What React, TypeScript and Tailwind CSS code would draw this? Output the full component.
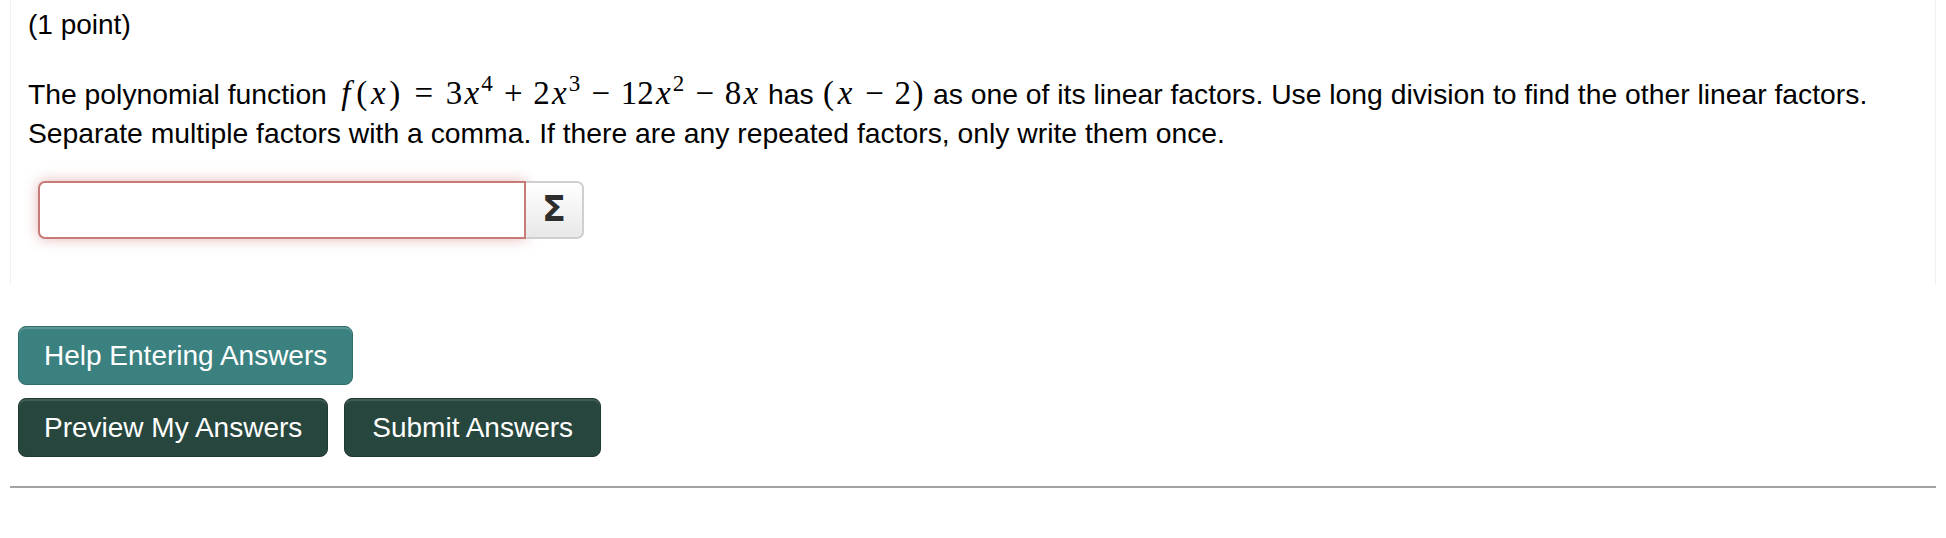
import React from 'react';

// MathJax-like rendering: fixed glyph boxes so widths follow TeX metrics
const Sup = ({ children }: { children: React.ReactNode }) => (
  <span className="relative -top-[13px] inline-block w-[12px] text-[23px] leading-none not-italic">{children}</span>
);

const X = () => <i className="inline-block w-[19px] text-center italic">x</i>;
const F = () => <i className="inline-block w-[20px] text-center italic pl-[2px]">f</i>;
const P = ({ c }: { c: string }) => <span className="inline-block w-[14px] text-center">{c}</span>;
const D = ({ c }: { c: string }) => <span className="inline-block w-[16.5px] text-center">{c}</span>;

const Op = ({ c, rel = false }: { c: string; rel?: boolean }) => (
  <span className={`inline-block w-[26px] text-center ${rel ? 'mx-[9px]' : 'mx-[7px]'}`}>{c}</span>
);

const Math = ({ children }: { children: React.ReactNode }) => (
  <span className="font-['Liberation_Serif',serif] text-[33px] leading-[39px] whitespace-nowrap">{children}</span>
);

export default function App() {
  return (
    <div className="w-[1946px] h-[538px] bg-white text-black font-['Liberation_Sans',Arial,sans-serif] overflow-hidden">
      {/* problem panel */}
      <div className="ml-[10px] w-[1926px] h-[285px] border-x border-[#f1f1f1] pl-[17px] pt-[5px]">
        <div className="text-[28px] leading-[40px]">(1 point)</div>
        <p className="mt-[29px] text-[28.3px] leading-[39px]">
          The polynomial function{' '}
          <Math>
            <F />
            <P c="(" />
            <X />
            <P c=")" />
            <Op c="=" rel />
            <D c="3" />
            <X />
            <Sup>4</Sup>
            <Op c="+" />
            <D c="2" />
            <X />
            <Sup>3</Sup>
            <Op c="−" />
            <D c="1" />
            <D c="2" />
            <X />
            <Sup>2</Sup>
            <Op c="−" />
            <D c="8" />
            <X />
          </Math>{' '}
          has{' '}
          <Math>
            <P c="(" />
            <X />
            <Op c="−" />
            <D c="2" />
            <P c=")" />
          </Math>{' '}
          as one of its linear factors. Use long division to find the other linear factors.
          <br />
          Separate multiple factors with a comma. If there are any repeated factors, only write them once.
        </p>
        <div className="mt-[28px] ml-[10px] flex">
          <div className="w-[488px] h-[58px] bg-white border-2 border-[#c67b79] rounded-l-[7px] shadow-[0_0_14px_rgba(185,74,72,0.4)]" />
          <div className="w-[58px] h-[58px] flex items-center justify-center rounded-r-[7px] border-2 border-l-0 border-[#cfcfcf] bg-gradient-to-b from-white to-[#e8e8e8]">
            <span className="font-['DejaVu_Sans',sans-serif] font-bold text-[35px] leading-none text-[#2d2d2d] -mt-[2px]">Σ</span>
          </div>
        </div>
      </div>

      {/* buttons */}
      <div className="ml-[18px] mt-[41px] flex flex-col gap-[13px] text-[28px] text-white">
        <div>
          <button className="h-[59px] px-[25px] leading-[40px] rounded-[8px] border border-[#2f6e6d] bg-[#3a8180] shadow-[inset_0_2px_0_rgba(255,255,255,0.18)]">
            Help Entering Answers
          </button>
        </div>
        <div className="flex gap-[16px]">
          <button className="h-[59px] px-[25px] leading-[40px] rounded-[8px] border border-[#1e3a31] bg-[#27463d] shadow-[inset_0_2px_0_rgba(255,255,255,0.12)]">
            Preview My Answers
          </button>
          <button className="h-[59px] px-[27px] leading-[40px] rounded-[8px] border border-[#1e3a31] bg-[#27463d] shadow-[inset_0_2px_0_rgba(255,255,255,0.12)]">
            Submit Answers
          </button>
        </div>
      </div>

      <div className="ml-[10px] w-[1926px] mt-[29px] border-t-2 border-[#a3a3a3] h-[2px] bg-[#eeeeee]" />
    </div>
  );
}
